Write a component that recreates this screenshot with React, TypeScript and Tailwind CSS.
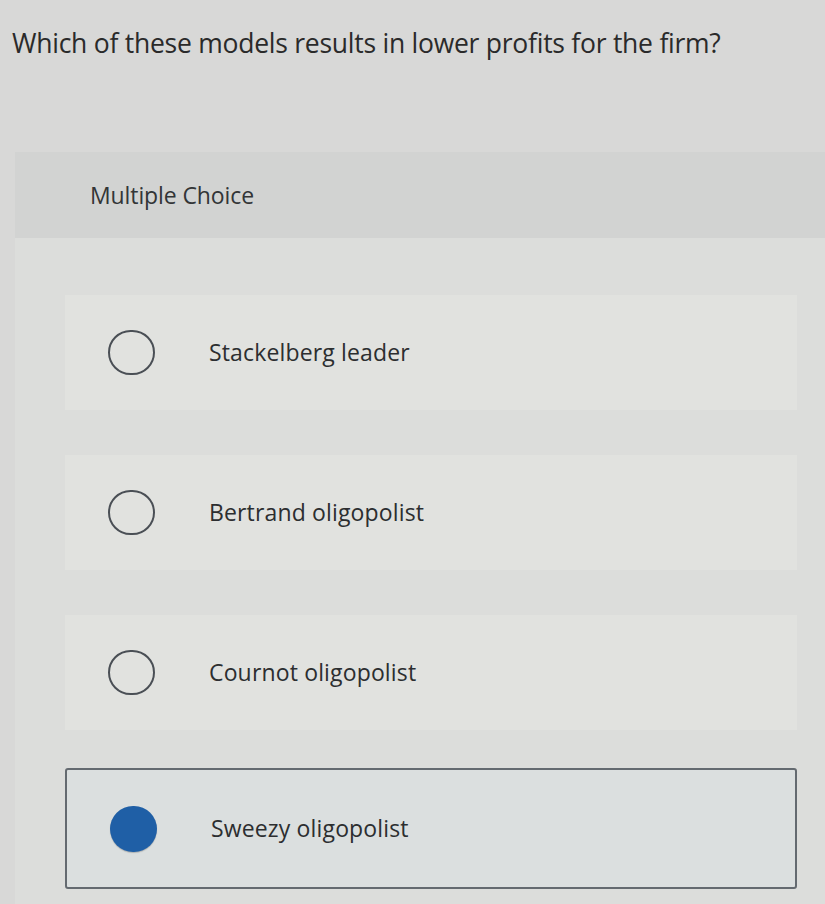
import React from 'react';

const options = [
  { label: 'Stackelberg leader', selected: false },
  { label: 'Bertrand oligopolist', selected: false },
  { label: 'Cournot oligopolist', selected: false },
  { label: 'Sweezy oligopolist', selected: true },
];

const Radio = ({ selected }: { selected: boolean }) =>
  selected ? (
    <span className="block h-[46px] w-[47px] rounded-full bg-[#1f5fa6] shadow-[0_1px_1px_rgba(0,0,0,0.2)]" />
  ) : (
    <span className="block h-[45px] w-[47px] rounded-full border-[2px] border-[#4a4f55]" />
  );

export default function App() {
  return (
    <div
      className="min-h-[904px] w-full overflow-hidden bg-[#d8d8d7] text-[#2a2c2e]"
      style={{ fontFamily: '"Open Sans", Arial, sans-serif' }}
    >
      <h1 className="pl-[12px] pt-[25px] text-[26.5px] leading-[36px] font-medium tracking-[-0.25px] text-[#2a2a2a]">
        Which of these models results in lower profits for the firm?
      </h1>

      <div className="ml-[15px] mt-[91px] bg-[#dcdddb]">
        <div className="flex h-[86px] items-center bg-[#d2d3d2] pl-[75px]">
          <span className="text-[23px] font-medium tracking-[-0.1px] text-[#333537]">Multiple Choice</span>
        </div>

        <div className="flex flex-col pb-[16px] pl-[50px] pr-[28px] pt-[57px]">
          {options.map((o, i) => (
            <div
              key={o.label}
              className={
                o.selected
                  ? 'mt-[38px] flex h-[121px] items-center rounded-[3px] border-[2px] border-[#646a70] bg-[#dbdfdf] pl-[43px]'
                  : i === 0
                    ? 'flex h-[115px] items-center bg-[#e1e2df] pl-[43px]'
                    : 'mt-[45px] flex h-[115px] items-center bg-[#e1e2df] pl-[43px]'
              }
            >
              <Radio selected={o.selected} />
              <span className="ml-[54px] text-[23px] font-medium tracking-[0.15px] text-[#2c2e30]">{o.label}</span>
            </div>
          ))}
        </div>
      </div>
    </div>
  );
}
